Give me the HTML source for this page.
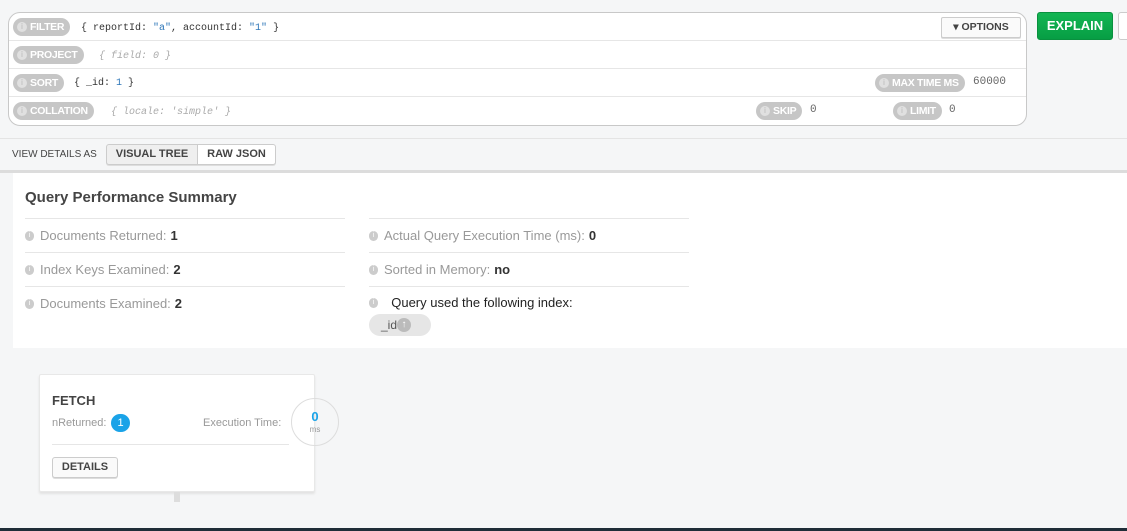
<!DOCTYPE html>
<html><head><meta charset="utf-8"><style>
*{box-sizing:border-box;margin:0;padding:0}
body{width:1127px;height:531px;background:#f5f6f7;font-family:"Liberation Sans",Arial,sans-serif;position:relative;overflow:hidden;color:#444}
.abs{position:absolute}
.qbar{left:8px;top:12px;width:1019px;height:114px;background:#fff;border:1px solid #c8c8c8;border-radius:12px;overflow:hidden}
.row{position:absolute;left:0;width:100%;height:28px;border-bottom:1px solid #e6e6e6}
.pill{position:absolute;height:18px;border-radius:9px;background:#c6c6c6;color:#fff;font-weight:bold;font-size:10.5px;letter-spacing:-0.3px;padding:0 6px 0 4px;white-space:nowrap;display:flex;align-items:center}
.pill i{display:inline-block;width:10px;height:10px;border-radius:5px;background:#e0e0e0;color:#c6c6c6;font-style:normal;font-size:8px;line-height:10px;text-align:center;margin-right:3px;letter-spacing:0}
.mono{position:absolute;font-family:"Liberation Mono",monospace;font-size:10px;color:#333;white-space:nowrap}
.ph{color:#aaa;font-style:italic}
.blue{color:#2d76b8}
.btn{position:absolute;border:1px solid #ccc;background:#fafafa;font-size:11px;font-weight:bold;color:#444;text-align:center;border-radius:3px;box-shadow:0 1px 0 #ddd}
.sum{left:13px;top:173px;width:1114px;height:175px;background:#fff}
.it{position:absolute;font-size:13px;color:#999;white-space:nowrap;display:flex;align-items:center}
.it b{color:#333;margin-left:4px}
.it i{display:inline-block;width:9px;height:10px;border-radius:5px;background:#ccc;color:#fff;font-size:7px;line-height:10px;text-align:center;font-style:normal;margin-right:6px}
.hl{position:absolute;height:1px;background:#e6e6e6}
</style></head><body>
<div class="abs qbar">
  <div class="row" style="top:0"></div>
  <div class="row" style="top:28px"></div>
  <div class="row" style="top:56px"></div>
  <div class="row" style="top:84px;border:none"></div>
  <div class="pill" style="left:4px;top:5px"><i>i</i>FILTER</div>
  <div class="mono" style="left:72px;top:10px">{ reportId: <span class="blue">"a"</span>, accountId: <span class="blue">"1"</span> }</div>
  <div class="pill" style="left:4px;top:33px"><i>i</i>PROJECT</div>
  <div class="mono ph" style="left:90px;top:38px">{ field: 0 }</div>
  <div class="pill" style="left:4px;top:61px"><i>i</i>SORT</div>
  <div class="mono" style="left:65px;top:65px">{ _id: <span class="blue">1</span> }</div>
  <div class="pill" style="left:4px;top:89px"><i>i</i>COLLATION</div>
  <div class="mono ph" style="left:102px;top:94px">{ locale: 'simple' }</div>
  <div class="btn" style="left:932px;top:4px;width:80px;height:21px;line-height:19px;border-radius:2px;font-size:10.5px">&#9662; OPTIONS</div>
  <div class="pill" style="left:866px;top:61px"><i>i</i>MAX TIME MS</div>
  <div class="mono" style="left:964px;top:63px;color:#666;font-size:11px">60000</div>
  <div class="pill" style="left:747px;top:89px"><i>i</i>SKIP</div>
  <div class="mono" style="left:801px;top:91px;color:#666;font-size:11px">0</div>
  <div class="pill" style="left:884px;top:89px"><i>i</i>LIMIT</div>
  <div class="mono" style="left:940px;top:91px;color:#666;font-size:11px">0</div>
</div>
<div class="abs" style="left:1037px;top:12px;width:76px;height:28px;background:linear-gradient(#13b553,#079e44);border:1px solid #09913f;border-radius:3px;color:#fff;font-weight:bold;font-size:13px;line-height:26px;text-align:center">EXPLAIN</div>
<div class="abs" style="left:1118px;top:12px;width:20px;height:28px;background:#fff;border:1px solid #ccc;border-radius:3px"></div>
<div class="abs" style="left:0;top:138px;width:1127px;height:1px;background:#e4e4e4"></div>
<div class="abs" style="left:12px;top:149px;font-size:10px;color:#444">VIEW DETAILS AS</div>
<div class="btn" style="left:106px;top:144px;width:92px;height:21px;line-height:19px;background:#efefef;border-radius:3px 0 0 3px">VISUAL TREE</div>
<div class="btn" style="left:197px;top:144px;width:79px;height:21px;line-height:19px;background:#fff;border-radius:0 3px 3px 0">RAW JSON</div>
<div class="abs" style="left:0;top:170px;width:1127px;height:3px;background:#dcdcdc"></div>
<div class="abs sum">
  <div class="abs" style="left:12px;top:16px;font-size:15px;font-weight:bold;color:#444">Query Performance Summary</div>
  <div class="hl" style="left:12px;top:45px;width:320px"></div>
  <div class="hl" style="left:12px;top:79px;width:320px"></div>
  <div class="hl" style="left:12px;top:113px;width:320px"></div>
  <div class="hl" style="left:356px;top:45px;width:320px"></div>
  <div class="hl" style="left:356px;top:79px;width:320px"></div>
  <div class="hl" style="left:356px;top:113px;width:320px"></div>
  <div class="it" style="left:12px;top:55px"><i>i</i>Documents Returned:<b>1</b></div>
  <div class="it" style="left:12px;top:89px"><i>i</i>Index Keys Examined:<b>2</b></div>
  <div class="it" style="left:12px;top:123px"><i>i</i>Documents Examined:<b>2</b></div>
  <div class="it" style="left:356px;top:55px"><i>i</i>Actual Query Execution Time (ms):<b>0</b></div>
  <div class="it" style="left:356px;top:89px"><i>i</i>Sorted in Memory:<b>no</b></div>
  <div class="it" style="left:356px;top:122px;color:#222"><i>i</i>&nbsp; Query used the following index:</div>
  <div class="abs" style="left:356px;top:141px;width:62px;height:22px;border-radius:11px;background:#e6e6e6;font-size:12px;color:#555;padding-left:12px;display:flex;align-items:center">_id<span style="display:inline-block;width:14px;height:14px;border-radius:7px;background:#bbb;color:#fff;font-size:10px;line-height:14px;text-align:center;font-weight:bold">&#8593;</span></div>
</div>
<div class="abs" style="left:39px;top:374px;width:276px;height:118px;background:#fff;border:1px solid #e8e8e8;box-shadow:0 2px 2px #e2e2e2;border-radius:2px"></div>
<div class="abs" style="left:52px;top:393px;font-size:13px;font-weight:bold;color:#444">FETCH</div>
<div class="abs" style="left:52px;top:417px;font-size:11px;color:#999">nReturned:</div>
<div class="abs" style="left:111px;top:414px;width:19px;height:18px;border-radius:9px;background:#1aa3e8;color:#fff;font-size:11px;line-height:18px;text-align:center">1</div>
<div class="abs" style="left:203px;top:417px;font-size:11px;color:#999">Execution Time:</div>
<div class="abs" style="left:291px;top:398px;width:48px;height:48px;border-radius:24px;border:1px solid #ddd;background:transparent"></div>
<div class="abs" style="left:291px;top:409px;width:48px;text-align:center;font-size:13px;color:#1aa3e8;font-weight:bold">0</div>
<div class="abs" style="left:291px;top:425px;width:48px;text-align:center;font-size:8px;color:#999">ms</div>
<div class="abs" style="left:52px;top:444px;width:237px;height:1px;background:#e6e6e6"></div>
<div class="btn" style="left:52px;top:457px;width:66px;height:21px;line-height:19px">DETAILS</div>
<div class="abs" style="left:174px;top:492px;width:6px;height:10px;background:#ddd"></div>
<div class="abs" style="left:0;top:528px;width:1127px;height:3px;background:#1f2d38"></div>
</body></html>
